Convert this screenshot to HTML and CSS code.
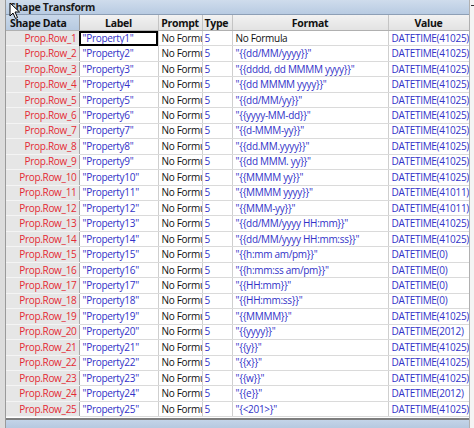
FILE: index.html
```html
<!DOCTYPE html>
<html>
<head>
<meta charset="utf-8">
<link rel="stylesheet" href="styles.css">
</head>
<body>
<div class="window">
  <div class="edge-left"></div>
  <div class="main">
    <div class="titlebar">Shape Transform</div>
    <table class="grid">
      <colgroup>
        <col class="c-sd"><col class="c-label"><col class="c-prompt"><col class="c-type"><col class="c-format"><col class="c-value">
      </colgroup>
      <thead>
        <tr>
          <th class="h-sd">Shape Data</th><th>Label</th><th>Prompt</th><th class="h-type">Type</th><th>Format</th><th>Value</th>
        </tr>
      </thead>
      <tbody id="rows">
        <tr><td class="sd">Prop.Row_1</td><td class="lbl sel">"Property1"</td><td class="pr">No Formula</td><td class="ty">5</td><td class="fm plain">No Formula</td><td class="vl">DATETIME(41025)</td></tr>
        <tr><td class="sd">Prop.Row_2</td><td class="lbl">"Property2"</td><td class="pr">No Formula</td><td class="ty">5</td><td class="fm">"{{dd/MM/yyyy}}"</td><td class="vl">DATETIME(41025)</td></tr>
        <tr><td class="sd">Prop.Row_3</td><td class="lbl">"Property3"</td><td class="pr">No Formula</td><td class="ty">5</td><td class="fm">"{{dddd, dd MMMM yyyy}}"</td><td class="vl">DATETIME(41025)</td></tr>
        <tr><td class="sd">Prop.Row_4</td><td class="lbl">"Property4"</td><td class="pr">No Formula</td><td class="ty">5</td><td class="fm">"{{dd MMMM yyyy}}"</td><td class="vl">DATETIME(41025)</td></tr>
        <tr><td class="sd">Prop.Row_5</td><td class="lbl">"Property5"</td><td class="pr">No Formula</td><td class="ty">5</td><td class="fm">"{{dd/MM/yy}}"</td><td class="vl">DATETIME(41025)</td></tr>
        <tr><td class="sd">Prop.Row_6</td><td class="lbl">"Property6"</td><td class="pr">No Formula</td><td class="ty">5</td><td class="fm">"{{yyyy-MM-dd}}"</td><td class="vl">DATETIME(41025)</td></tr>
        <tr><td class="sd">Prop.Row_7</td><td class="lbl">"Property7"</td><td class="pr">No Formula</td><td class="ty">5</td><td class="fm">"{{d-MMM-yy}}"</td><td class="vl">DATETIME(41025)</td></tr>
        <tr><td class="sd">Prop.Row_8</td><td class="lbl">"Property8"</td><td class="pr">No Formula</td><td class="ty">5</td><td class="fm">"{{dd.MM.yyyy}}"</td><td class="vl">DATETIME(41025)</td></tr>
        <tr><td class="sd">Prop.Row_9</td><td class="lbl">"Property9"</td><td class="pr">No Formula</td><td class="ty">5</td><td class="fm">"{{dd MMM. yy}}"</td><td class="vl">DATETIME(41025)</td></tr>
        <tr><td class="sd">Prop.Row_10</td><td class="lbl">"Property10"</td><td class="pr">No Formula</td><td class="ty">5</td><td class="fm">"{{MMMM yy}}"</td><td class="vl">DATETIME(41025)</td></tr>
        <tr><td class="sd">Prop.Row_11</td><td class="lbl">"Property11"</td><td class="pr">No Formula</td><td class="ty">5</td><td class="fm">"{{MMMM yyyy}}"</td><td class="vl">DATETIME(41011)</td></tr>
        <tr><td class="sd">Prop.Row_12</td><td class="lbl">"Property12"</td><td class="pr">No Formula</td><td class="ty">5</td><td class="fm">"{{MMM-yy}}"</td><td class="vl">DATETIME(41011)</td></tr>
        <tr><td class="sd">Prop.Row_13</td><td class="lbl">"Property13"</td><td class="pr">No Formula</td><td class="ty">5</td><td class="fm">"{{dd/MM/yyyy HH:mm}}"</td><td class="vl">DATETIME(41025)</td></tr>
        <tr><td class="sd">Prop.Row_14</td><td class="lbl">"Property14"</td><td class="pr">No Formula</td><td class="ty">5</td><td class="fm">"{{dd/MM/yyyy HH:mm:ss}}"</td><td class="vl">DATETIME(41025)</td></tr>
        <tr><td class="sd">Prop.Row_15</td><td class="lbl">"Property15"</td><td class="pr">No Formula</td><td class="ty">5</td><td class="fm">"{{h:mm am/pm}}"</td><td class="vl">DATETIME(0)</td></tr>
        <tr><td class="sd">Prop.Row_16</td><td class="lbl">"Property16"</td><td class="pr">No Formula</td><td class="ty">5</td><td class="fm">"{{h:mm:ss am/pm}}"</td><td class="vl">DATETIME(0)</td></tr>
        <tr><td class="sd">Prop.Row_17</td><td class="lbl">"Property17"</td><td class="pr">No Formula</td><td class="ty">5</td><td class="fm">"{{HH:mm}}"</td><td class="vl">DATETIME(0)</td></tr>
        <tr><td class="sd">Prop.Row_18</td><td class="lbl">"Property18"</td><td class="pr">No Formula</td><td class="ty">5</td><td class="fm">"{{HH:mm:ss}}"</td><td class="vl">DATETIME(0)</td></tr>
        <tr><td class="sd">Prop.Row_19</td><td class="lbl">"Property19"</td><td class="pr">No Formula</td><td class="ty">5</td><td class="fm">"{{MMMM}}"</td><td class="vl">DATETIME(41025)</td></tr>
        <tr><td class="sd">Prop.Row_20</td><td class="lbl">"Property20"</td><td class="pr">No Formula</td><td class="ty">5</td><td class="fm">"{{yyyy}}"</td><td class="vl">DATETIME(2012)</td></tr>
        <tr><td class="sd">Prop.Row_21</td><td class="lbl">"Property21"</td><td class="pr">No Formula</td><td class="ty">5</td><td class="fm">"{{y}}"</td><td class="vl">DATETIME(41025)</td></tr>
        <tr><td class="sd">Prop.Row_22</td><td class="lbl">"Property22"</td><td class="pr">No Formula</td><td class="ty">5</td><td class="fm">"{{x}}"</td><td class="vl">DATETIME(41025)</td></tr>
        <tr><td class="sd">Prop.Row_23</td><td class="lbl">"Property23"</td><td class="pr">No Formula</td><td class="ty">5</td><td class="fm">"{{w}}"</td><td class="vl">DATETIME(41025)</td></tr>
        <tr><td class="sd">Prop.Row_24</td><td class="lbl">"Property24"</td><td class="pr">No Formula</td><td class="ty">5</td><td class="fm">"{{e}}"</td><td class="vl">DATETIME(2012)</td></tr>
        <tr><td class="sd">Prop.Row_25</td><td class="lbl">"Property25"</td><td class="pr">No Formula</td><td class="ty">5</td><td class="fm">"{&lt;201&gt;}"</td><td class="vl">DATETIME(41025)</td></tr>
      </tbody>
    </table>
    <div class="bottombar"></div>
  </div>
  <div class="edge-right"><span class="dash"></span></div>
  <svg class="cursor" width="12" height="18" viewBox="0 0 12 18">
    <path d="M1 1 L1 14 L4 11 L6.5 16.5 L8.5 15.5 L6 10 L10.5 10 Z" fill="#ffffff" stroke="#000000" stroke-width="1" stroke-linejoin="round"/>
  </svg>
</div>
</body>
</html>
```
FILE: styles.css
```css
html, body {
  margin: 0;
  padding: 0;
  background: #ffffff;
}
body {
  width: 474px;
  height: 428px;
  overflow: hidden;
  font-family: "Open Sans", "Liberation Sans", sans-serif;
  font-size: 10px;
  letter-spacing: -0.3px;
}
.window {
  position: relative;
  display: flex;
  width: 474px;
  height: 428px;
}
.edge-left {
  width: 5px;
  background: #dcdcdc;
  border-right: 1px solid #9a9a9a;
  flex: none;
}
.main {
  width: 463px;
  flex: none;
  display: flex;
  flex-direction: column;
}
.edge-right {
  width: 4px;
  flex: none;
  background: #f4f4f4;
  border-left: 1px solid #b0b0b0;
  position: relative;
}
.dash {
  position: absolute;
  left: 1px;
  top: 5px;
  width: 3px;
  height: 1px;
  background: #333;
}
.titlebar {
  height: 14px;
  line-height: 14px;
  padding-left: 4px;
  font-weight: bold;
  font-size: 10.5px;
  color: #1a1a1a;
  background: linear-gradient(#cfdcec, #b8cbe2);
  border-bottom: 1px solid #8d9fb6;
  flex: none;
}
.grid {
  border-collapse: collapse;
  table-layout: fixed;
  width: 463px;
  flex: none;
}
.c-sd { width: 73px; }
.c-label { width: 79px; }
.c-prompt { width: 44px; }
.c-type { width: 30px; }
.c-format { width: 156px; }
.c-value { width: 81px; }
th {
  height: 15px;
  padding: 0 2px;
  font-weight: bold;
  font-size: 10.5px;
  color: #111;
  text-align: center;
  background: linear-gradient(#f2f2f2, #e2e2e2);
  border-right: 1px solid #c4c4c4;
  border-bottom: 1px solid #b0b0b0;
  white-space: nowrap;
  overflow: hidden;
}
th.h-sd {
  text-align: left;
  padding-left: 4px;
  background: linear-gradient(#c9d8ea, #b7cae1);
  border-right: 1px solid #9a9a9a;
}
th.h-type {
  text-align: left;
}
td {
  height: 14.46px;
  padding: 0 3px;
  white-space: nowrap;
  overflow: hidden;
  border-right: 1px solid #cfcfcf;
  border-bottom: 1px solid #dadada;
  line-height: 13px;
  color: #3232c8;
}
td.sd {
  background: #e6e6e6;
  color: #e42a34;
  text-align: right;
  padding-right: 2px;
  border-right: 1px solid #a8a8a8;
  border-bottom: 1px solid #f4f4f4;
}
td.pr, td.plain {
  color: #111;
  text-overflow: clip;
}
td.ty {
  padding-left: 2px;
}
td.sel {
  outline: 2px solid #000;
  outline-offset: -2px;
}
.bottombar {
  flex: 1;
  border-top: 2px solid #7e7e7e;
  margin-top: 1px;
  background: linear-gradient(#c4d4e8, #b6c9e0);
}
.cursor {
  position: absolute;
  left: 9px;
  top: 2px;
}
```
